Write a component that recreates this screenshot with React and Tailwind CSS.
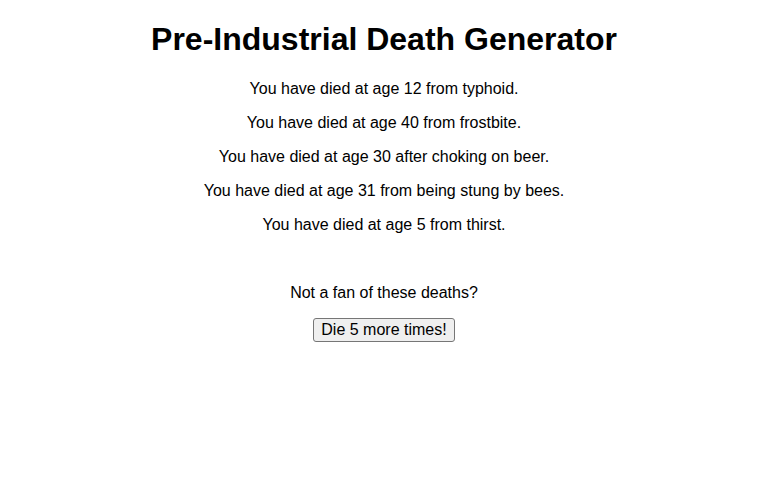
export default function App() {
  const deaths = [
    "You have died at age 12 from typhoid.",
    "You have died at age 40 from frostbite.",
    "You have died at age 30 after choking on beer.",
    "You have died at age 31 from being stung by bees.",
    "You have died at age 5 from thirst.",
  ];
  return (
    <div className="min-h-[480px] bg-white text-black font-['Liberation_Sans',Arial,sans-serif] flex flex-col items-center">
      <h1 className="mt-[21px] mb-[22px] text-[32px] font-bold leading-[37px]">
        Pre-Industrial Death Generator
      </h1>
      <div className="flex flex-col items-center gap-4 text-base leading-[18px]">
        {deaths.map((d) => (
          <p key={d}>{d}</p>
        ))}
        <p className="h-[18px]">&nbsp;</p>
        <p>Not a fan of these deaths?</p>
        <button className="h-6 px-[7px] text-base leading-[18px] bg-[#efefef] border border-[#767676] rounded-[3px] hover:bg-[#e5e5e5]">
          Die 5 more times!
        </button>
      </div>
    </div>
  );
}
